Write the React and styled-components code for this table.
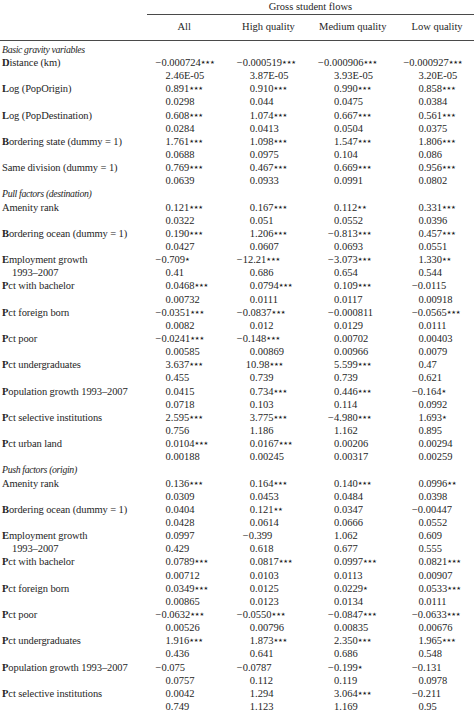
import React from "react";
import styled, { createGlobalStyle } from "styled-components";

const GlobalStyle = createGlobalStyle`
	html, body {
		margin: 0;
		padding: 0;
		background: #ffffff;
	}
	body {
		width: 474px;
		overflow: hidden;
		font-family: "Liberation Serif", "Times New Roman", serif;
		color: #262626;
	}
`;

const COLS = "142px repeat(4, 84.3px)";
const ROW_H = 13.15;
// how far a negative value hangs left of the column's text edge
const COL_HANG = [10, 13, 6, 6.5];

const rows = [
	{ section: "Basic gravity variables" },
	{
		label: "Distance (km)",
		coef: ["−0.000724***", "−0.000519***", "−0.000906***", "−0.000927***"],
		se: ["2.46E-05", "3.87E-05", "3.93E-05", "3.20E-05"],
		hang: [null, null, 16, 15],
	},
	{
		label: "Log (PopOrigin)",
		coef: ["0.891***", "0.910***", "0.990***", "0.858***"],
		se: ["0.0298", "0.044", "0.0475", "0.0384"],
	},
	{
		label: "Log (PopDestination)",
		coef: ["0.608***", "1.074***", "0.667***", "0.561***"],
		se: ["0.0284", "0.0413", "0.0504", "0.0375"],
	},
	{
		label: "Bordering state (dummy = 1)",
		coef: ["1.761***", "1.098***", "1.547***", "1.806***"],
		se: ["0.0688", "0.0975", "0.104", "0.086"],
	},
	{
		label: "Same division (dummy = 1)",
		coef: ["0.769***", "0.467***", "0.669***", "0.956***"],
		se: ["0.0639", "0.0933", "0.0991", "0.0802"],
	},
	{ section: "Pull factors (destination)" },
	{
		label: "Amenity rank",
		coef: ["0.121***", "0.167***", "0.112**", "0.331***"],
		se: ["0.0322", "0.051", "0.0552", "0.0396"],
	},
	{
		label: "Bordering ocean (dummy = 1)",
		coef: ["0.190***", "1.206***", "−0.813***", "0.457***"],
		se: ["0.0427", "0.0607", "0.0693", "0.0551"],
	},
	{
		label: "Employment growth",
		label2: "1993–2007",
		coef: ["−0.709*", "−12.21***", "−3.073***", "1.330**"],
		se: ["0.41", "0.686", "0.654", "0.544"],
	},
	{
		label: "Pct with bachelor",
		coef: ["0.0468***", "0.0794***", "0.109***", "−0.0115"],
		se: ["0.00732", "0.0111", "0.0117", "0.00918"],
	},
	{
		label: "Pct foreign born",
		coef: ["−0.0351***", "−0.0837***", "−0.000811", "−0.0565***"],
		se: ["0.0082", "0.012", "0.0129", "0.0111"],
	},
	{
		label: "Pct poor",
		coef: ["−0.0241***", "−0.148***", "0.00702", "0.00403"],
		se: ["0.00585", "0.00869", "0.00966", "0.0079"],
	},
	{
		label: "Pct undergraduates",
		coef: ["3.637***", "10.98***", "5.599***", "0.47"],
		se: ["0.455", "0.739", "0.739", "0.621"],
		hang: [null, 4, null, null],
	},
	{
		label: "Population growth 1993–2007",
		coef: ["0.0415", "0.734***", "0.446***", "−0.164*"],
		se: ["0.0718", "0.103", "0.114", "0.0992"],
	},
	{
		label: "Pct selective institutions",
		coef: ["2.595***", "3.775***", "−4.980***", "1.693*"],
		se: ["0.756", "1.186", "1.162", "0.895"],
	},
	{
		label: "Pct urban land",
		coef: ["0.0104***", "0.0167***", "0.00206", "0.00294"],
		se: ["0.00188", "0.00245", "0.00317", "0.00259"],
	},
	{ section: "Push factors (origin)" },
	{
		label: "Amenity rank",
		coef: ["0.136***", "0.164***", "0.140***", "0.0996**"],
		se: ["0.0309", "0.0453", "0.0484", "0.0398"],
	},
	{
		label: "Bordering ocean (dummy = 1)",
		coef: ["0.0404", "0.121**", "0.0347", "−0.00447"],
		se: ["0.0428", "0.0614", "0.0666", "0.0552"],
	},
	{
		label: "Employment growth",
		label2: "1993–2007",
		coef: ["0.0997", "−0.399", "1.062", "0.609"],
		se: ["0.429", "0.618", "0.677", "0.555"],
		hang: [null, 7, null, null],
	},
	{
		label: "Pct with bachelor",
		coef: ["0.0789***", "0.0817***", "0.0997***", "0.0821***"],
		se: ["0.00712", "0.0103", "0.0113", "0.00907"],
	},
	{
		label: "Pct foreign born",
		coef: ["0.0349***", "0.0125", "0.0229*", "0.0533***"],
		se: ["0.00865", "0.0123", "0.0134", "0.0111"],
	},
	{
		label: "Pct poor",
		coef: ["−0.0632***", "−0.0550***", "−0.0847***", "−0.0633***"],
		se: ["0.00526", "0.00796", "0.00835", "0.00676"],
	},
	{
		label: "Pct undergraduates",
		coef: ["1.916***", "1.873***", "2.350***", "1.965***"],
		se: ["0.436", "0.641", "0.686", "0.548"],
	},
	{
		label: "Population growth 1993–2007",
		coef: ["−0.075", "−0.0787", "−0.199*", "−0.131"],
		se: ["0.0757", "0.112", "0.119", "0.0978"],
	},
	{
		label: "Pct selective institutions",
		coef: ["0.0042", "1.294", "3.064***", "−0.211"],
		se: ["0.749", "1.123", "1.169", "0.95"],
	},
];

const Page = styled.div`
	width: 474px;
	font-size: 10.5px;
`;

const Spanner = styled.div`
	margin-left: 147px;
	width: 327px;
	height: 15px;
	line-height: 14px;
	text-align: center;
	box-sizing: border-box;
	border-bottom: 1.5px solid #4a4a4a;
`;

const HeaderRow = styled.div`
	display: grid;
	grid-template-columns: ${COLS};
	width: 480px;
	height: 25.5px;
	line-height: 23px;
	box-sizing: border-box;
	border-bottom: 1.5px solid #4a4a4a;
`;

const HeaderCell = styled.div`
	text-align: center;
	white-space: nowrap;
`;

const Body = styled.div`
	padding-top: 2.4px;
`;

const Row = styled.div`
	display: grid;
	grid-template-columns: ${COLS};
	height: ${ROW_H}px;
	line-height: ${ROW_H}px;
	white-space: nowrap;
`;

const Section = styled.div`
	grid-column: 1 / -1;
	padding-left: 2px;
	font-style: italic;
	font-size: 9.8px;
	letter-spacing: -0.35px;
`;

const Label = styled.div`
	padding-left: ${(p) => (p.$indent ? 12 : 2)}px;
	letter-spacing: -0.1px;
	&::first-letter {
		font-weight: ${(p) => (p.$stem ? 700 : 400)};
	}
`;

const Value = styled.div`
	padding-left: 23.5px;
	text-indent: ${(p) => -p.$hang}px;
`;

const Stars = styled.span`
	font-family: "DejaVu Sans", sans-serif;
	font-size: 5.3px;
	letter-spacing: -0.2px;
	vertical-align: 2.2px;
	color: #1e1e1e;
`;

const Cell = ({ text, col, hang }) => {
	const m = text.match(/^(.*?)(\**)$/);
	const neg = text.startsWith("−");
	const h = hang != null ? hang : neg ? COL_HANG[col] : 0;
	return (
		<Value $hang={h}>
			{m[1]}
			{m[2] && <Stars>{"★".repeat(m[2].length)}</Stars>}
		</Value>
	);
};

const stem = (s) => "DLBEP".includes(s[0]);

export default function App() {
	return (
		<>
			<GlobalStyle />
			<Page>
				<Spanner>Gross student flows</Spanner>
				<HeaderRow>
					<div />
					<HeaderCell>All</HeaderCell>
					<HeaderCell>High quality</HeaderCell>
					<HeaderCell>Medium quality</HeaderCell>
					<HeaderCell>Low quality</HeaderCell>
				</HeaderRow>
				<Body>
					{rows.map((r, i) =>
						r.section ? (
							<Row key={i}>
								<Section>{r.section}</Section>
							</Row>
						) : (
							<React.Fragment key={i}>
								<Row>
									<Label $stem={stem(r.label)}>{r.label}</Label>
									{r.coef.map((c, j) => (
										<Cell key={j} text={c} col={j} hang={r.hang ? r.hang[j] : null} />
									))}
								</Row>
								<Row>
									<Label $indent>{r.label2 || ""}</Label>
									{r.se.map((c, j) => (
										<Cell key={j} text={c} col={j} />
									))}
								</Row>
							</React.Fragment>
						)
					)}
				</Body>
			</Page>
		</>
	);
}
